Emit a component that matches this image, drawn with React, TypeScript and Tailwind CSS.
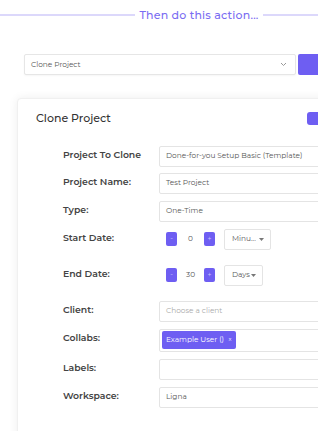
import React from 'react';

const font = { fontFamily: '"Montserrat", "Inter", "Liberation Sans", sans-serif' };

function Field({ children, h = 'h-[21px]' }: { children?: React.ReactNode; h?: string }) {
  return (
    <div className={`${h} w-[170px] flex items-center px-[6px] border border-[#e4e4e4] rounded-[2px] bg-white text-[7.4px] text-[#555]`}>
      {children}
    </div>
  );
}

function Caret() {
  return (
    <svg width="5" height="3" viewBox="0 0 5 3">
      <path d="M0 0h5L2.5 3z" fill="#777" />
    </svg>
  );
}

function Stepper({ value, unit, unitW }: { value: string; unit: string; unitW: string }) {
  return (
    <div className="flex items-center ml-[7px] h-[21px]">
      <div className="w-[11px] h-[14px] rounded-[2px] bg-[#6e5ef2] text-[#c9c2fb] text-[7px] leading-[13px] text-center">-</div>
      <div className="w-[27px] text-center text-[7.4px] text-[#555]">{value}</div>
      <div className="w-[11px] h-[14px] rounded-[2px] bg-[#6e5ef2] text-[#c9c2fb] text-[7px] leading-[13px] text-center">+</div>
      <div className={`ml-[9px] ${unitW} h-[21px] flex items-center justify-between pl-[7px] pr-[6px] border border-[#e4e4e4] rounded-[2px] bg-white text-[7.4px] text-[#555]`}>
        <span>{unit}</span>
        <Caret />
      </div>
    </div>
  );
}

export default function App() {
  const rows: { label: string; content: React.ReactNode; h: string }[] = [
    { label: 'Project To Clone', content: <Field>Done-for-you Setup Basic (Template)</Field>, h: 'h-[27px]' },
    { label: 'Project Name:', content: <Field>Test Project</Field>, h: 'h-[28px]' },
    { label: 'Type:', content: <Field>One-Time</Field>, h: 'h-[28px]' },
    { label: 'Start Date:', content: <Stepper value="0" unit="Minu..." unitW="w-[47px]" />, h: 'h-[36px]' },
    { label: 'End Date:', content: <Stepper value="30" unit="Days" unitW="w-[39px]" />, h: 'h-[36px]' },
    { label: 'Client:', content: <Field><span className="text-[#aaa]">Choose a client</span></Field>, h: 'h-[28px]' },
    {
      label: 'Collabs:',
      content: (
        <Field h="h-[23px]">
          <span className="-ml-[4px] h-[18px] px-[4px] flex items-center gap-[4px] rounded-[2px] bg-[#6e5ef2] text-white text-[7.4px]">
            Example User () <span className="text-[7px]">×</span>
          </span>
        </Field>
      ),
      h: 'h-[30px]',
    },
    { label: 'Labels:', content: <Field />, h: 'h-[28px]' },
    { label: 'Workspace:', content: <Field>Ligna</Field>, h: 'h-[28px]' },
  ];

  return (
    <div className="w-[318px] h-[431px] overflow-hidden bg-white relative" style={font}>
      {/* divider heading */}
      <div className="flex items-center h-[30px]">
        <div className="w-[135px] h-[2px] bg-[#dcd8fb]" />
        <div className="flex-1 text-center text-[11px] font-medium text-[#7a6cf2] tracking-[0.2px]">Then do this action...</div>
        <div className="w-[55px] h-[2px] bg-[#dcd8fb]" />
      </div>

      {/* action select */}
      <div className="flex mt-[24px] ml-[24px]">
        <div className="w-[276px] h-[21px] flex items-center justify-between px-[6px] border border-[#e6e6e6] rounded-[2px] bg-white text-[7.4px] text-[#555] shadow-[0_1px_2px_rgba(0,0,0,0.04)]">
          <span>Clone Project</span>
          <svg width="7" height="5" viewBox="0 0 7 5" className="mr-[2px]">
            <path d="M1 1l2.5 2.5L6 1" fill="none" stroke="#999" strokeWidth="1" />
          </svg>
        </div>
        <div className="ml-[2px] w-[20px] h-[21px] rounded-l-[2px] bg-[#6e5ef2]" />
      </div>

      {/* card */}
      <div className="absolute left-[17px] top-[98px] w-[320px] h-[360px] bg-white rounded-tl-[4px] shadow-[0_0_10px_rgba(0,0,0,0.07)] border border-[#f0f0f0]">
        <div className="flex items-center justify-between pl-[18px] pt-[11px]">
          <div className="text-[11px] font-medium text-[#333]">Clone Project</div>
          <div className="w-[16px] h-[13px] rounded-[3px] bg-[#6e5ef2] mr-[13px]" />
        </div>

        <div className="mt-[19px] pl-[45px]">
          {rows.map((r) => (
            <div key={r.label} className={`flex items-start ${r.h}`}>
              <div className="w-[96px] pt-[2px] text-[9.3px] font-semibold text-[#444] leading-[13px]">{r.label}</div>
              {r.content}
            </div>
          ))}
        </div>
      </div>
    </div>
  );
}
